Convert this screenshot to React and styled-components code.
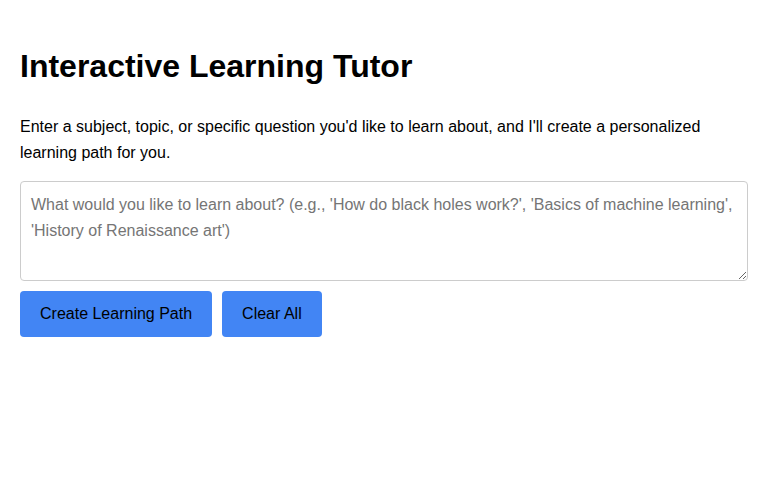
import React from "react";
import styled, { createGlobalStyle } from "styled-components";

const GlobalStyle = createGlobalStyle`
  html, body {
    margin: 0;
    padding: 0;
    background: #ffffff;
    font-family: "Liberation Sans", Arial, sans-serif;
    color: #000000;
  }
`;

const Page = styled.main`
  padding: 20px;
  display: flex;
  flex-direction: column;
`;

const Title = styled.h1`
  margin: 28px 0 29px;
  font-size: 32px;
  line-height: 37px;
  font-weight: 700;
`;

const Intro = styled.p`
  margin: 0 0 15px;
  font-size: 16px;
  line-height: 26px;
`;

const Prompt = styled.textarea`
  box-sizing: border-box;
  width: 100%;
  height: 100px;
  padding: 10px;
  border: 1px solid #cccccc;
  border-radius: 4px;
  font-family: "Liberation Sans", Arial, sans-serif;
  font-size: 16px;
  line-height: 26px;
  color: #000;
  resize: vertical;
  outline: none;

  &::placeholder {
    color: #757575;
  }
`;

const Actions = styled.div`
  display: flex;
  gap: 10px;
  margin-top: 10px;
`;

const Button = styled.button`
  height: 46px;
  padding: 0 20px;
  border: none;
  border-radius: 4px;
  background: #4285f4;
  color: #000000;
  font-family: "Liberation Sans", Arial, sans-serif;
  font-size: 16px;
  cursor: pointer;
`;

export default function App() {
  return (
    <>
      <GlobalStyle />
      <Page>
        <Title>Interactive Learning Tutor</Title>
        <Intro>
          Enter a subject, topic, or specific question you'd like to learn about, and I'll create a
          personalized learning path for you.
        </Intro>
        <Prompt placeholder="What would you like to learn about? (e.g., 'How do black holes work?', 'Basics of machine learning', 'History of Renaissance art')" />
        <Actions>
          <Button>Create Learning Path</Button>
          <Button>Clear All</Button>
        </Actions>
      </Page>
    </>
  );
}
